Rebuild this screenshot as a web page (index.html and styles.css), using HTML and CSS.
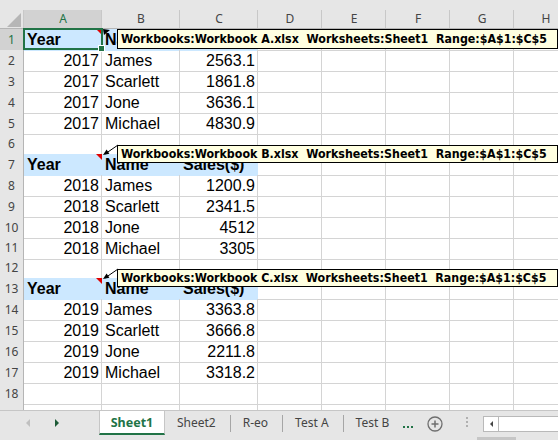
FILE: index.html
```html
<!DOCTYPE html>
<html lang="en">
<head>
    <meta charset="UTF-8">
    <title>Sheet1 - Excel</title>
    <link rel="stylesheet" href="styles.css">
</head>
<body>
    <div class="book">
        <div class="sheet">
            <div class="row head">
                <div class="corner"><span class="select-all"></span></div>
                <div class="ch on">A</div><div class="ch">B</div><div class="ch">C</div><div class="ch">D</div>
                <div class="ch">E</div><div class="ch">F</div><div class="ch">G</div><div class="ch">H</div>
            </div>
            <div class="row">
                <div class="rh on">1</div>
                <div class="c b hl cur"><span class="flag"></span>Year</div><div class="c b hl">Name</div><div class="c b hl">Sales($)</div>
                <div class="c"></div><div class="c"></div><div class="c"></div><div class="c"></div><div class="c"></div>
            </div>
            <div class="row">
                <div class="rh">2</div>
                <div class="c n">2017</div><div class="c">James</div><div class="c n">2563.1</div>
                <div class="c"></div><div class="c"></div><div class="c"></div><div class="c"></div><div class="c"></div>
            </div>
            <div class="row">
                <div class="rh">3</div>
                <div class="c n">2017</div><div class="c">Scarlett</div><div class="c n">1861.8</div>
                <div class="c"></div><div class="c"></div><div class="c"></div><div class="c"></div><div class="c"></div>
            </div>
            <div class="row">
                <div class="rh">4</div>
                <div class="c n">2017</div><div class="c">Jone</div><div class="c n">3636.1</div>
                <div class="c"></div><div class="c"></div><div class="c"></div><div class="c"></div><div class="c"></div>
            </div>
            <div class="row">
                <div class="rh">5</div>
                <div class="c n">2017</div><div class="c">Michael</div><div class="c n">4830.9</div>
                <div class="c"></div><div class="c"></div><div class="c"></div><div class="c"></div><div class="c"></div>
            </div>
            <div class="row short">
                <div class="rh">6</div>
                <div class="c"></div><div class="c"></div><div class="c"></div>
                <div class="c"></div><div class="c"></div><div class="c"></div><div class="c"></div><div class="c"></div>
            </div>
            <div class="row">
                <div class="rh">7</div>
                <div class="c b hl"><span class="flag"></span>Year</div><div class="c b hl">Name</div><div class="c b hl">Sales($)</div>
                <div class="c"></div><div class="c"></div><div class="c"></div><div class="c"></div><div class="c"></div>
            </div>
            <div class="row">
                <div class="rh">8</div>
                <div class="c n">2018</div><div class="c">James</div><div class="c n">1200.9</div>
                <div class="c"></div><div class="c"></div><div class="c"></div><div class="c"></div><div class="c"></div>
            </div>
            <div class="row">
                <div class="rh">9</div>
                <div class="c n">2018</div><div class="c">Scarlett</div><div class="c n">2341.5</div>
                <div class="c"></div><div class="c"></div><div class="c"></div><div class="c"></div><div class="c"></div>
            </div>
            <div class="row">
                <div class="rh">10</div>
                <div class="c n">2018</div><div class="c">Jone</div><div class="c n">4512</div>
                <div class="c"></div><div class="c"></div><div class="c"></div><div class="c"></div><div class="c"></div>
            </div>
            <div class="row short">
                <div class="rh">11</div>
                <div class="c n">2018</div><div class="c">Michael</div><div class="c n">3305</div>
                <div class="c"></div><div class="c"></div><div class="c"></div><div class="c"></div><div class="c"></div>
            </div>
            <div class="row short">
                <div class="rh">12</div>
                <div class="c"></div><div class="c"></div><div class="c"></div>
                <div class="c"></div><div class="c"></div><div class="c"></div><div class="c"></div><div class="c"></div>
            </div>
            <div class="row">
                <div class="rh">13</div>
                <div class="c b hl"><span class="flag"></span>Year</div><div class="c b hl">Name</div><div class="c b hl">Sales($)</div>
                <div class="c"></div><div class="c"></div><div class="c"></div><div class="c"></div><div class="c"></div>
            </div>
            <div class="row">
                <div class="rh">14</div>
                <div class="c n">2019</div><div class="c">James</div><div class="c n">3363.8</div>
                <div class="c"></div><div class="c"></div><div class="c"></div><div class="c"></div><div class="c"></div>
            </div>
            <div class="row">
                <div class="rh">15</div>
                <div class="c n">2019</div><div class="c">Scarlett</div><div class="c n">3666.8</div>
                <div class="c"></div><div class="c"></div><div class="c"></div><div class="c"></div><div class="c"></div>
            </div>
            <div class="row">
                <div class="rh">16</div>
                <div class="c n">2019</div><div class="c">Jone</div><div class="c n">2211.8</div>
                <div class="c"></div><div class="c"></div><div class="c"></div><div class="c"></div><div class="c"></div>
            </div>
            <div class="row">
                <div class="rh">17</div>
                <div class="c n">2019</div><div class="c">Michael</div><div class="c n">3318.2</div>
                <div class="c"></div><div class="c"></div><div class="c"></div><div class="c"></div><div class="c"></div>
            </div>
            <div class="row">
                <div class="rh">18</div>
                <div class="c"></div><div class="c"></div><div class="c"></div>
                <div class="c"></div><div class="c"></div><div class="c"></div><div class="c"></div><div class="c"></div>
            </div>
            <div class="row">
                <div class="rh"></div>
                <div class="c"></div><div class="c"></div><div class="c"></div>
                <div class="c"></div><div class="c"></div><div class="c"></div><div class="c"></div><div class="c"></div>
            </div>

            <!-- comments -->
            <svg class="arrows" width="558" height="410" viewBox="0 0 558 410">
                <polygon points="103,29 110,30 104,35" fill="#000"/>
                <line x1="118" y1="145" x2="105" y2="154" stroke="#000" stroke-width="1"/>
                <polygon points="103,155 106.6,149.6 109.4,153.8" fill="#000"/>
                <line x1="118" y1="269" x2="105" y2="278" stroke="#000" stroke-width="1"/>
                <polygon points="103,279 106.6,273.6 109.4,277.8" fill="#000"/>
            </svg>
            <div class="comment c1">Workbooks:Workbook A.xlsx&nbsp; Worksheets:Sheet1&nbsp; Range:$A$1:$C$5</div>
            <div class="comment c2">Workbooks:Workbook B.xlsx&nbsp; Worksheets:Sheet1&nbsp; Range:$A$1:$C$5</div>
            <div class="comment c3">Workbooks:Workbook C.xlsx&nbsp; Worksheets:Sheet1&nbsp; Range:$A$1:$C$5</div>
        </div>

        <div class="tabbar">
            <div class="nav">
                <span class="arrow-left"></span>
                <span class="arrow-right"></span>
            </div>
            <div class="tab active">Sheet1</div>
            <div class="tab">Sheet2</div>
            <span class="sep"></span>
            <div class="tab">R-eo</div>
            <span class="sep"></span>
            <div class="tab">Test A</div>
            <span class="sep"></span>
            <div class="tab">Test B</div>
            <div class="more"><i></i><i></i><i></i></div>
            <svg class="add" width="16" height="16" viewBox="0 0 16 16">
                <circle cx="8" cy="8" r="7" fill="none" stroke="#6f6f6f" stroke-width="1.3"/>
                <path d="M8 4.5v7M4.5 8h7" stroke="#6f6f6f" stroke-width="1.5"/>
            </svg>
            <div class="grip"><i></i><i></i><i></i></div>
            <div class="hscroll">
                <div class="hscroll-btn"><span></span></div>
            </div>
            <div class="resize"></div>
        </div>
    </div>
</body>
</html>
```

FILE: styles.css
```css
body {
    margin: 0;
    background-color: #fff;
    font-family: "Liberation Sans", Arial, sans-serif;
}
.book {
    width: 558px;
    height: 440px;
    overflow: hidden;
}
.sheet {
    position: relative;
    height: 410px;
    overflow: hidden;
}
.row {
    display: grid;
    grid-template-columns: 24px 78px 78px 78px repeat(5, 64px);
    height: 21px;
}
.row.short {
    height: 20px;
}
.row.head {
    height: 29px;
    padding-top: 10px;
    box-sizing: border-box;
    background-color: #e6e6e6;
}

/* headers */
.corner {
    display: flex;
    justify-content: flex-end;
    align-items: flex-end;
    padding: 0 2px 1px 0;
    border-right: 1px solid #c8c8c8;
    border-bottom: 1px solid #b5b5b5;
}
.select-all {
    width: 0;
    height: 0;
    border-left: 14px solid transparent;
    border-bottom: 14px solid #b6b6b6;
}
.ch {
    background: linear-gradient(#c8c8c8, #c8c8c8) right bottom / 1px 19px no-repeat, #e6e6e6;
    border-bottom: 1px solid #b5b5b5;
    color: #444;
    font-family: "Noto Sans", sans-serif;
    font-size: 12px;
    line-height: 18px;
    text-align: center;
}
.ch.on {
    background-color: #d2d2d2;
    color: #217346;
}
.rh {
    background-color: #e6e6e6;
    border-right: 1px solid #b5b5b5;
    border-bottom: 1px solid #cdcdcd;
    color: #444;
    font-family: "Noto Sans", sans-serif;
    font-size: 12px;
    line-height: 21px;
    text-align: center;
}
.row.short .rh {
    line-height: 20px;
}
.rh.on {
    background-color: #d2d2d2;
    color: #217346;
}

/* cells */
.c {
    position: relative;
    border-right: 1px solid #d4d4d4;
    border-bottom: 1px solid #d4d4d4;
    padding: 1px 2px 0 3px;
    font-size: 16px;
    line-height: 20px;
    color: #000;
    white-space: nowrap;
}
.c.n {
    text-align: right;
}
.c.b {
    font-weight: bold;
}
.c.hl {
    background-color: #cce8ff;
    border-color: #cce8ff;
}
.flag {
    position: absolute;
    top: 0;
    right: -1px;
    width: 0;
    height: 0;
    border-top: 6px solid #e00000;
    border-left: 6px solid transparent;
    z-index: 1;
}
.cur::before {
    content: "";
    position: absolute;
    left: -1px;
    top: -1px;
    width: 80px;
    height: 22px;
    border: 2px solid #217346;
    box-sizing: border-box;
    z-index: 2;
}
.cur::after {
    content: "";
    position: absolute;
    left: 74px;
    top: 16px;
    width: 5px;
    height: 5px;
    background-color: #217346;
    border: 1px solid #fff;
    z-index: 3;
}

/* comments */
.arrows {
    position: absolute;
    left: 0;
    top: 0;
    z-index: 4;
}
.comment {
    position: absolute;
    left: 117px;
    width: 441px;
    height: 18px;
    box-sizing: border-box;
    padding-left: 3px;
    border: 1px solid #000;
    background-color: #ffffe1;
    font-family: "DejaVu Sans Condensed", "DejaVu Sans", sans-serif;
    font-weight: bold;
    font-size: 12.3px;
    line-height: 17px;
    white-space: nowrap;
    color: #000;
    z-index: 5;
}
.c1 {
    top: 29px;
    height: 20px;
    line-height: 19px;
}
.c2 { top: 145px; }
.c3 { top: 269px; }

/* sheet tabs */
.tabbar {
    position: relative;
    display: flex;
    align-items: flex-start;
    height: 30px;
    box-sizing: border-box;
    border-top: 1px solid #c6c6c6;
    background-color: #e6e6e6;
    font-family: "Noto Sans", sans-serif;
    font-size: 12px;
    color: #444;
}
.nav {
    display: flex;
    align-items: center;
    width: 99px;
    height: 23px;
}
.arrow-left {
    margin-left: 26px;
    width: 0;
    height: 0;
    border-top: 4px solid transparent;
    border-bottom: 4px solid transparent;
    border-right: 4px solid #c0c0c0;
}
.arrow-right {
    margin-left: 25px;
    width: 0;
    height: 0;
    border-top: 4px solid transparent;
    border-bottom: 4px solid transparent;
    border-left: 4px solid #1d5b37;
}
.tab {
    height: 23px;
    line-height: 23px;
    padding: 0 14px 0 12px;
    white-space: nowrap;
}
.tab.active {
    width: 66px;
    padding: 0;
    box-sizing: border-box;
    margin-top: -1px;
    height: 25px;
    line-height: 24px;
    text-align: center;
    background-color: #fff;
    border-left: 1px solid #c6c6c6;
    border-right: 1px solid #c6c6c6;
    border-top: 1px solid #c6c6c6;
    border-bottom: 2px solid #217346;
    color: #217346;
    font-weight: bold;
    font-size: 12.5px;
}
.sep {
    width: 1px;
    height: 17px;
    margin-top: 4px;
    background-color: #a6a6a6;
}
.more {
    display: flex;
    gap: 2px;
    margin: 15px 0 0 0;
}
.more i {
    width: 2px;
    height: 2px;
    background-color: #217346;
}
.add {
    margin: 5px 0 0 14px;
}
.grip {
    display: flex;
    flex-direction: column;
    gap: 2px;
    margin: 6px 0 0 23px;
}
.grip i {
    width: 2px;
    height: 2px;
    background-color: #b0b0b0;
}
.hscroll {
    margin: 5px 0 0 15px;
    flex: 1;
    height: 14px;
    border: 1px solid #b9b9b9;
    border-right: none;
    background-color: #fff;
}
.hscroll-btn {
    display: flex;
    align-items: center;
    justify-content: center;
    width: 14px;
    height: 14px;
    border-right: 1px solid #b9b9b9;
}
.hscroll-btn span {
    width: 0;
    height: 0;
    border-top: 3px solid transparent;
    border-bottom: 3px solid transparent;
    border-right: 3px solid #444;
}
.resize {
    position: absolute;
    left: 477px;
    bottom: 0;
    width: 39px;
    height: 3px;
    background-color: #c6c6c6;
}
```
